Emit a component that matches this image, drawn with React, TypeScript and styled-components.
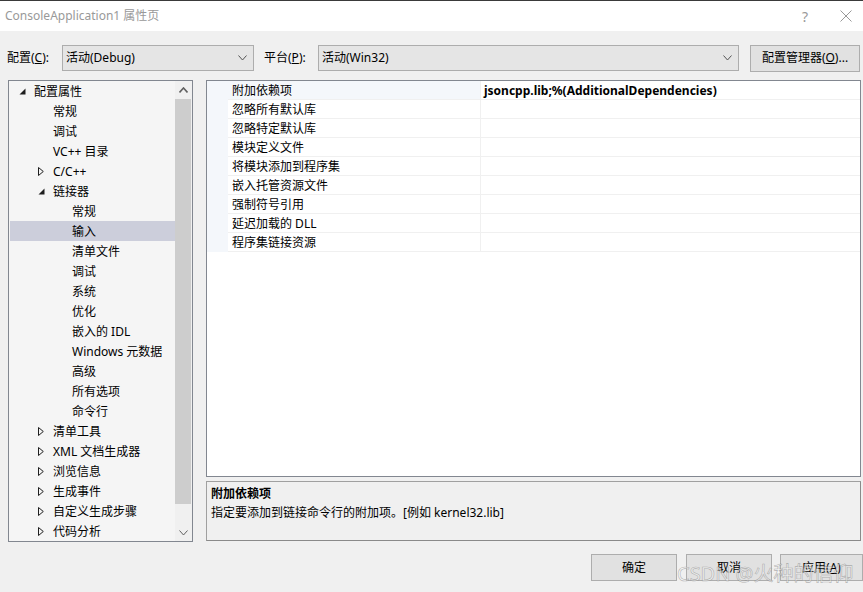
import React from "react";
import styled, { createGlobalStyle } from "styled-components";

const Global = createGlobalStyle`
  html, body { margin: 0; padding: 0; background: #f0f0f0; }
  * { box-sizing: border-box; }
  body { font-family: "Noto Sans", "Noto Sans CJK SC", sans-serif; font-size: 12px; color: #000; }
`;

const Window = styled.div`
  width: 863px;
  height: 592px;
  display: flex;
  flex-direction: column;
  background: #f0f0f0;
  position: relative;
  overflow: hidden;
`;

const TitleBar = styled.div`
  height: 31px;
  background: #fff;
  border-top: 1px solid #3a3a3a;
  display: flex;
  align-items: center;
  padding-left: 5px;
  color: #999;
  font-size: 12px;
`;

const TitleText = styled.div`
  flex: 1;
  line-height: 16px;
`;

const TitleBtn = styled.div<{ $w: number }>`
  width: ${(p) => p.$w}px;
  height: 30px;
  display: flex;
  align-items: center;
  justify-content: center;
  color: #999;
  font-size: 14px;
`;

const Body = styled.div`
  flex: 1;
  display: flex;
  flex-direction: column;
  padding: 14px 2px 0 8px;
`;

const ConfigRow = styled.div`
  display: flex;
  align-items: center;
  height: 26px;
`;

const Label = styled.div<{ $w: number; $ml?: number }>`
  width: ${(p) => p.$w}px;
  margin-left: ${(p) => p.$ml ?? 0}px;
  line-height: 16px;
  white-space: nowrap;
`;

const Combo = styled.div<{ $w: number }>`
  width: ${(p) => p.$w}px;
  height: 26px;
  background: #e5e5e5;
  border: 1px solid #adadad;
  display: flex;
  align-items: center;
  padding-left: 3px;
  padding-right: 6px;
  line-height: 16px;
`;

const ComboText = styled.div`
  flex: 1;
`;

const Button = styled.div<{ $w: number; $ml?: number }>`
  width: ${(p) => p.$w}px;
  height: 27px;
  flex: none;
  margin-left: ${(p) => p.$ml ?? 0}px;
  background: #e1e1e1;
  border: 1px solid #adadad;
  display: flex;
  align-items: center;
  justify-content: center;
  line-height: 16px;
  white-space: nowrap;
`;

const Main = styled.div`
  display: flex;
  margin-top: 9px;
  height: 462px;
`;

const TreePanel = styled.div`
  width: 185px;
  height: 462px;
  border: 1px solid #828790;
  background: #f5f5f5;
  display: flex;
`;

const TreeList = styled.div`
  flex: 1;
  padding-left: 1px;
  display: flex;
  flex-direction: column;
  overflow: hidden;
`;

const TreeRow = styled.div<{ $level: number; $sel?: boolean }>`
  height: 20px;
  flex: none;
  display: flex;
  align-items: center;
  padding-top: 1px;
  padding-left: ${(p) => 6 + p.$level * 19}px;
  background: ${(p) => (p.$sel ? "#cccedb" : "transparent")};
  line-height: 16px;
  white-space: nowrap;
`;

const Arrow = styled.div`
  width: 18px;
  height: 19px;
  display: flex;
  align-items: center;
  padding-left: 3px;
`;

const ScrollBar = styled.div`
  width: 17px;
  background: #f0f0f0;
  display: flex;
  flex-direction: column;
  align-items: stretch;
`;

const ScrollBtn = styled.div`
  height: 17px;
  display: flex;
  align-items: center;
  justify-content: center;
`;

const Thumb = styled.div`
  height: 405px;
  margin: 1px 1px 0 0;
  background: #cdcdcd;
`;

const ScrollGap = styled.div`
  flex: 1;
`;

const RightCol = styled.div`
  flex: 1;
  margin-left: 13px;
  display: flex;
  flex-direction: column;
`;

const Grid = styled.div`
  height: 397px;
  border: 1px solid #828790;
  background: #fff;
  display: flex;
  flex-direction: column;
`;

const GridRow = styled.div`
  height: 19px;
  flex: none;
  display: flex;
`;

const MarginCell = styled.div`
  width: 21px;
  background: #f4f7fb;
`;

const NameCell = styled.div<{ $hl?: boolean }>`
  width: 253px;
  padding: 2px 0 0 4px;
  display: flex;
  align-items: center;
  background: ${(p) => (p.$hl ? "#f4f7fb" : "#fff")};
  border-right: 1px solid #f0f0f0;
  border-bottom: 1px solid #f0f0f0;
  line-height: 16px;
  white-space: nowrap;
`;

const ValueCell = styled.div`
  flex: 1;
  padding: 2px 0 0 3px;
  display: flex;
  align-items: center;
  font-weight: 700;
  border-bottom: 1px solid #f0f0f0;
  line-height: 16px;
  white-space: nowrap;
`;

const Desc = styled.div`
  margin-top: 4px;
  height: 60px;
  border: 1px solid #a0a0a0;
  border-right-color: #8a8a8a;
  border-bottom-color: #8a8a8a;
  background: #f0f0f0;
  padding: 2px 4px;
  line-height: 19px;
`;

const DescTitle = styled.div`
  font-weight: 700;
`;

const ButtonRow = styled.div`
  display: flex;
  justify-content: flex-end;
  margin-top: 12px;
  margin-right: -2px;
`;

const Watermark = styled.div`
  position: absolute;
  left: 677px;
  top: 560px;
  font-family: "Noto Sans", "Noto Sans CJK SC", sans-serif;
  font-size: 20px;
  line-height: 28px;
  color: rgba(255, 255, 255, 0.55);
  -webkit-text-stroke: 0.6px rgba(110, 110, 110, 0.5);
  white-space: nowrap;
  pointer-events: none;
`;

const Chevron = ({ up, color = "#555", w = 9 }: { up?: boolean; color?: string; w?: number }) => (
  <svg width={w} height={6} viewBox="0 0 9 6">
    <path d={up ? "M0.5 5.5 L4.5 1 L8.5 5.5" : "M0.5 0.5 L4.5 5 L8.5 0.5"} fill="none" stroke={color} strokeWidth={up ? 1.6 : 1} />
  </svg>
);

const Expanded = () => (
  <svg width={7} height={7} viewBox="0 0 7 7">
    <path d="M6.5 0.5 L6.5 6.5 L0.5 6.5 Z" fill="#1e1e1e" />
  </svg>
);

const Collapsed = () => (
  <svg width={6} height={9} viewBox="0 0 6 9">
    <path d="M0.5 0.5 L5.3 4.5 L0.5 8.5 Z" fill="none" stroke="#1e1e1e" strokeWidth={1} />
  </svg>
);

type Node = { label: string; level: number; arrow?: "open" | "closed"; sel?: boolean };

const tree: Node[] = [
  { label: "配置属性", level: 0, arrow: "open" },
  { label: "常规", level: 1 },
  { label: "调试", level: 1 },
  { label: "VC++ 目录", level: 1 },
  { label: "C/C++", level: 1, arrow: "closed" },
  { label: "链接器", level: 1, arrow: "open" },
  { label: "常规", level: 2 },
  { label: "输入", level: 2, sel: true },
  { label: "清单文件", level: 2 },
  { label: "调试", level: 2 },
  { label: "系统", level: 2 },
  { label: "优化", level: 2 },
  { label: "嵌入的 IDL", level: 2 },
  { label: "Windows 元数据", level: 2 },
  { label: "高级", level: 2 },
  { label: "所有选项", level: 2 },
  { label: "命令行", level: 2 },
  { label: "清单工具", level: 1, arrow: "closed" },
  { label: "XML 文档生成器", level: 1, arrow: "closed" },
  { label: "浏览信息", level: 1, arrow: "closed" },
  { label: "生成事件", level: 1, arrow: "closed" },
  { label: "自定义生成步骤", level: 1, arrow: "closed" },
  { label: "代码分析", level: 1, arrow: "closed" },
];

const props = [
  "附加依赖项",
  "忽略所有默认库",
  "忽略特定默认库",
  "模块定义文件",
  "将模块添加到程序集",
  "嵌入托管资源文件",
  "强制符号引用",
  "延迟加载的 DLL",
  "程序集链接资源",
];

export default function App() {
  return (
    <Window>
      <Global />
      <TitleBar>
        <TitleText>ConsoleApplication1 属性页</TitleText>
        <TitleBtn $w={46}>?</TitleBtn>
        <TitleBtn $w={35}>
          <svg width={12} height={12} viewBox="0 0 12 12">
            <path d="M0.5 0.5 L11.5 11.5 M11.5 0.5 L0.5 11.5" stroke="#999" strokeWidth={1} />
          </svg>
        </TitleBtn>
      </TitleBar>
      <Body>
        <ConfigRow>
          <Label $w={55} $ml={-1}>
            配置(<u>C</u>):
          </Label>
          <Combo $w={192}>
            <ComboText>活动(Debug)</ComboText>
            <Chevron />
          </Combo>
          <Label $w={54} $ml={10}>
            平台(<u>P</u>):
          </Label>
          <Combo $w={421}>
            <ComboText>活动(Win32)</ComboText>
            <Chevron />
          </Combo>
          <Button $w={110} $ml={11}>
            配置管理器(<u>O</u>)...
          </Button>
        </ConfigRow>
        <Main>
          <TreePanel>
            <TreeList>
              {tree.map((n, i) => (
                <TreeRow key={i} $level={n.level} $sel={n.sel}>
                  <Arrow>{n.arrow === "open" ? <Expanded /> : n.arrow === "closed" ? <Collapsed /> : null}</Arrow>
                  {n.label}
                </TreeRow>
              ))}
            </TreeList>
            <ScrollBar>
              <ScrollBtn>
                <Chevron up color="#606060" />
              </ScrollBtn>
              <Thumb />
              <ScrollGap />
              <ScrollBtn>
                <Chevron color="#606060" />
              </ScrollBtn>
            </ScrollBar>
          </TreePanel>
          <RightCol>
            <Grid>
              {props.map((p, i) => (
                <GridRow key={i}>
                  <MarginCell />
                  <NameCell $hl={i === 0}>{p}</NameCell>
                  <ValueCell>{i === 0 ? "jsoncpp.lib;%(AdditionalDependencies)" : ""}</ValueCell>
                </GridRow>
              ))}
            </Grid>
            <Desc>
              <DescTitle>附加依赖项</DescTitle>
              <div>指定要添加到链接命令行的附加项。[例如 kernel32.lib]</div>
            </Desc>
          </RightCol>
        </Main>
        <ButtonRow>
          <Button $w={86}>确定</Button>
          <Button $w={86} $ml={9}>
            取消
          </Button>
          <Button $w={83} $ml={8}>
            应用(<u>A</u>)
          </Button>
        </ButtonRow>
      </Body>
      <Watermark>CSDN @火种的信仰</Watermark>
    </Window>
  );
}
